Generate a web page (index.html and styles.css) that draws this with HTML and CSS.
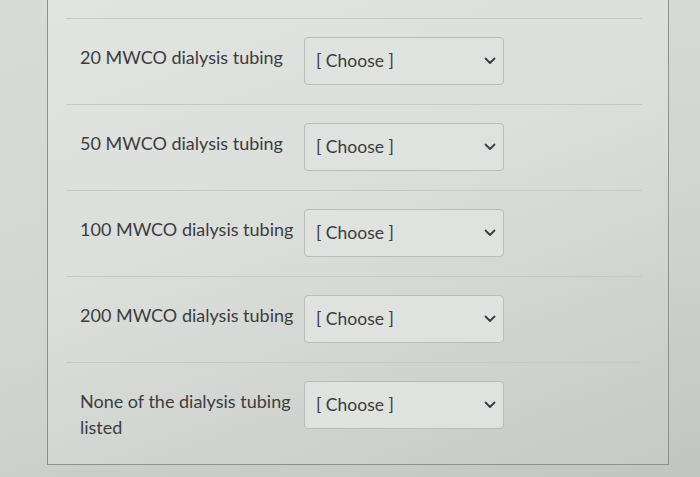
FILE: index.html
```html
<!DOCTYPE html>
<html lang="en">
<head>
<meta charset="utf-8">
<title>Matching question</title>
<link rel="stylesheet" href="styles.css">
</head>
<body>
<div class="page">
  <div class="panel">
    <div class="answers">
      <div class="row">
        <div class="label">20 MWCO dialysis tubing</div>
        <div class="select"><span>[ Choose ]</span><svg class="chev" viewBox="0 0 12 8" width="12" height="8"><path d="M1.5 1.5 L6 6 L10.5 1.5" fill="none" stroke="#3a3d40" stroke-width="1.8" stroke-linecap="round" stroke-linejoin="round"/></svg></div>
      </div>
      <div class="row">
        <div class="label">50 MWCO dialysis tubing</div>
        <div class="select"><span>[ Choose ]</span><svg class="chev" viewBox="0 0 12 8" width="12" height="8"><path d="M1.5 1.5 L6 6 L10.5 1.5" fill="none" stroke="#3a3d40" stroke-width="1.8" stroke-linecap="round" stroke-linejoin="round"/></svg></div>
      </div>
      <div class="row">
        <div class="label">100 MWCO dialysis tubing</div>
        <div class="select"><span>[ Choose ]</span><svg class="chev" viewBox="0 0 12 8" width="12" height="8"><path d="M1.5 1.5 L6 6 L10.5 1.5" fill="none" stroke="#3a3d40" stroke-width="1.8" stroke-linecap="round" stroke-linejoin="round"/></svg></div>
      </div>
      <div class="row">
        <div class="label">200 MWCO dialysis tubing</div>
        <div class="select"><span>[ Choose ]</span><svg class="chev" viewBox="0 0 12 8" width="12" height="8"><path d="M1.5 1.5 L6 6 L10.5 1.5" fill="none" stroke="#3a3d40" stroke-width="1.8" stroke-linecap="round" stroke-linejoin="round"/></svg></div>
      </div>
      <div class="row">
        <div class="label">None of the dialysis tubing listed</div>
        <div class="select"><span>[ Choose ]</span><svg class="chev" viewBox="0 0 12 8" width="12" height="8"><path d="M1.5 1.5 L6 6 L10.5 1.5" fill="none" stroke="#3a3d40" stroke-width="1.8" stroke-linecap="round" stroke-linejoin="round"/></svg></div>
      </div>
    </div>
  </div>
</div>
</body>
</html>
```
FILE: styles.css
```css
html, body {
  margin: 0;
  padding: 0;
}

body {
  width: 700px;
  height: 477px;
  overflow: hidden;
  background: linear-gradient(165deg, #d9dbd8 0%, #d3d5d2 55%, #c3c5c3 100%);
  font-family: Lato, "Open Sans", sans-serif;
  color: #3b3d40;
}

.page {
  display: flex;
  height: 477px;
}

.panel {
  margin-left: 47px;
  width: 620px;
  height: 464px;
  border-left: 1px solid #8e908e;
  border-right: 1px solid #8e908e;
  border-bottom: 1px solid #8e908e;
  background: linear-gradient(160deg, #e2e4e1 0%, #dcdedb 45%, #c7c9c6 100%);
}

.answers {
  margin: 18px 26px 0 18px;
}

.row {
  display: flex;
  align-items: flex-start;
  border-top: 1px solid #c6c9c6;
  padding: 18px 0 19px 14px;
}

.label {
  width: 224px;
  padding-top: 7px;
  font-size: 18px;
  line-height: 26px;
  padding-right: 8px;
  box-sizing: border-box;
}

.select {
  width: 200px;
  height: 48px;
  box-sizing: border-box;
  border: 1px solid #b9bcb9;
  border-radius: 4px;
  background: #dfe2df;
  display: flex;
  align-items: center;
  justify-content: space-between;
  padding: 0 7px 0 11px;
  font-size: 17.5px;
  color: #3b3d40;
}

.select span {
  padding-bottom: 2px;
}

.chev {
  display: block;
}
```
